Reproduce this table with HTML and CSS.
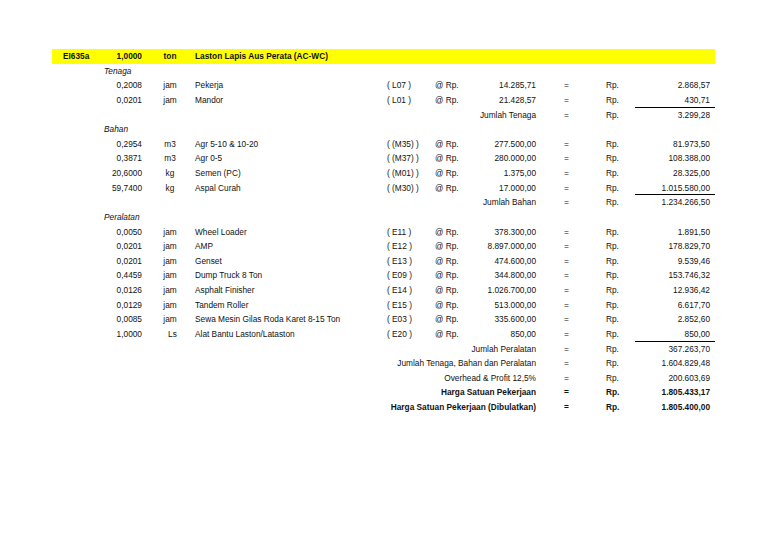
FILE: index.html
```html
<!DOCTYPE html>
<html>
<head>
<meta charset="utf-8">
<link rel="stylesheet" href="styles.css">
</head>
<body>
<div class="sheet">
  <div class="row head">
    <div class="code">EI635a</div><div class="qty">1,0000</div><div class="unit">ton</div><div class="title">Laston Lapis Aus Perata (AC-WC)</div>
  </div>
  <div class="row"><div class="section">Tenaga</div></div>
  <div class="row">
    <div class="qty">0,2008</div><div class="unit">jam</div><div class="desc">Pekerja</div><div class="ref">( L07 )</div><div class="at">@ Rp.</div><div class="price">14.285,71</div><div class="eq">=</div><div class="rp">Rp.</div><div class="total">2.868,57</div>
  </div>
  <div class="row">
    <div class="qty">0,0201</div><div class="unit">jam</div><div class="desc">Mandor</div><div class="ref">( L01 )</div><div class="at">@ Rp.</div><div class="price">21.428,57</div><div class="eq">=</div><div class="rp">Rp.</div><div class="total line">430,71</div>
  </div>
  <div class="row">
    <div class="label">Jumlah Tenaga</div><div class="eq">=</div><div class="rp">Rp.</div><div class="total">3.299,28</div>
  </div>
  <div class="row"><div class="section">Bahan</div></div>
  <div class="row">
    <div class="qty">0,2954</div><div class="unit">m3</div><div class="desc">Agr 5-10 &amp; 10-20</div><div class="ref">( (M35) )</div><div class="at">@ Rp.</div><div class="price">277.500,00</div><div class="eq">=</div><div class="rp">Rp.</div><div class="total">81.973,50</div>
  </div>
  <div class="row">
    <div class="qty">0,3871</div><div class="unit">m3</div><div class="desc">Agr 0-5</div><div class="ref">( (M37) )</div><div class="at">@ Rp.</div><div class="price">280.000,00</div><div class="eq">=</div><div class="rp">Rp.</div><div class="total">108.388,00</div>
  </div>
  <div class="row">
    <div class="qty">20,6000</div><div class="unit">kg</div><div class="desc">Semen (PC)</div><div class="ref">( (M01) )</div><div class="at">@ Rp.</div><div class="price">1.375,00</div><div class="eq">=</div><div class="rp">Rp.</div><div class="total">28.325,00</div>
  </div>
  <div class="row">
    <div class="qty">59,7400</div><div class="unit">kg</div><div class="desc">Aspal Curah</div><div class="ref">( (M30) )</div><div class="at">@ Rp.</div><div class="price">17.000,00</div><div class="eq">=</div><div class="rp">Rp.</div><div class="total line">1.015.580,00</div>
  </div>
  <div class="row">
    <div class="label">Jumlah Bahan</div><div class="eq">=</div><div class="rp">Rp.</div><div class="total">1.234.266,50</div>
  </div>
  <div class="row"><div class="section">Peralatan</div></div>
  <div class="row">
    <div class="qty">0,0050</div><div class="unit">jam</div><div class="desc">Wheel Loader</div><div class="ref">( E11 )</div><div class="at">@ Rp.</div><div class="price">378.300,00</div><div class="eq">=</div><div class="rp">Rp.</div><div class="total">1.891,50</div>
  </div>
  <div class="row">
    <div class="qty">0,0201</div><div class="unit">jam</div><div class="desc">AMP</div><div class="ref">( E12 )</div><div class="at">@ Rp.</div><div class="price">8.897.000,00</div><div class="eq">=</div><div class="rp">Rp.</div><div class="total">178.829,70</div>
  </div>
  <div class="row">
    <div class="qty">0,0201</div><div class="unit">jam</div><div class="desc">Genset</div><div class="ref">( E13 )</div><div class="at">@ Rp.</div><div class="price">474.600,00</div><div class="eq">=</div><div class="rp">Rp.</div><div class="total">9.539,46</div>
  </div>
  <div class="row">
    <div class="qty">0,4459</div><div class="unit">jam</div><div class="desc">Dump Truck 8 Ton</div><div class="ref">( E09 )</div><div class="at">@ Rp.</div><div class="price">344.800,00</div><div class="eq">=</div><div class="rp">Rp.</div><div class="total">153.746,32</div>
  </div>
  <div class="row">
    <div class="qty">0,0126</div><div class="unit">jam</div><div class="desc">Asphalt Finisher</div><div class="ref">( E14 )</div><div class="at">@ Rp.</div><div class="price">1.026.700,00</div><div class="eq">=</div><div class="rp">Rp.</div><div class="total">12.936,42</div>
  </div>
  <div class="row">
    <div class="qty">0,0129</div><div class="unit">jam</div><div class="desc">Tandem Roller</div><div class="ref">( E15 )</div><div class="at">@ Rp.</div><div class="price">513.000,00</div><div class="eq">=</div><div class="rp">Rp.</div><div class="total">6.617,70</div>
  </div>
  <div class="row">
    <div class="qty">0,0085</div><div class="unit">jam</div><div class="desc">Sewa Mesin Gilas Roda Karet 8-15 Ton</div><div class="ref">( E03 )</div><div class="at">@ Rp.</div><div class="price">335.600,00</div><div class="eq">=</div><div class="rp">Rp.</div><div class="total">2.852,60</div>
  </div>
  <div class="row">
    <div class="qty">1,0000</div><div class="unit ls">Ls</div><div class="desc">Alat Bantu Laston/Lataston</div><div class="ref">( E20 )</div><div class="at">@ Rp.</div><div class="price">850,00</div><div class="eq">=</div><div class="rp">Rp.</div><div class="total line">850,00</div>
  </div>
  <div class="row">
    <div class="label">Jumlah Peralatan</div><div class="eq">=</div><div class="rp">Rp.</div><div class="total">367.263,70</div>
  </div>
  <div class="row">
    <div class="label">Jumlah Tenaga, Bahan dan Peralatan</div><div class="eq">=</div><div class="rp">Rp.</div><div class="total">1.604.829,48</div>
  </div>
  <div class="row">
    <div class="label">Overhead &amp; Profit 12,5%</div><div class="eq">=</div><div class="rp">Rp.</div><div class="total">200.603,69</div>
  </div>
  <div class="row bold">
    <div class="label">Harga Satuan Pekerjaan</div><div class="eq">=</div><div class="rp">Rp.</div><div class="total">1.805.433,17</div>
  </div>
  <div class="row bold">
    <div class="label">Harga Satuan Pekerjaan (Dibulatkan)</div><div class="eq">=</div><div class="rp">Rp.</div><div class="total">1.805.400,00</div>
  </div>
</div>
</body>
</html>
```

FILE: styles.css
```css
html, body {
  margin: 0;
  padding: 0;
  background: #ffffff;
}

body {
  font-family: "Liberation Sans", Arial, sans-serif;
  font-size: 8.3px;
  color: #111111;
}

.sheet {
  margin: 49px 0 0 52px;
  width: 663px;
}

.row {
  display: grid;
  grid-template-columns: 43px 50px 50px 192px 48px 45px 56px 60px 39px 80px;
  height: 14.625px;
  line-height: 14.625px;
  white-space: nowrap;
}

.row > div {
  box-sizing: border-box;
  height: 14.625px;
}

.head {
  background: #ffff00;
  font-weight: bold;
}

.bold {
  font-weight: bold;
}

.code {
  grid-column: 1;
  padding-left: 11px;
}

.qty {
  grid-column: 2;
  text-align: right;
  padding-right: 3px;
}

.unit {
  grid-column: 3;
  text-align: center;
}

.unit.ls {
  padding-left: 5px;
}

.title {
  grid-column: 4 / 11;
}

.desc {
  grid-column: 4;
}

.ref {
  grid-column: 5;
}

.at {
  grid-column: 6;
}

.price {
  grid-column: 7;
  text-align: right;
}

.eq {
  grid-column: 8;
  text-align: center;
  padding-left: 1px;
}

.rp {
  grid-column: 9;
  padding-left: 10px;
}

.total {
  grid-column: 10;
  text-align: right;
  padding-right: 5px;
}

.total.line {
  border-bottom: 1px solid #000000;
}

.section {
  grid-column: 2 / 5;
  padding-left: 9px;
  font-style: italic;
}

.label {
  grid-column: 1 / 8;
  text-align: right;
}
```
